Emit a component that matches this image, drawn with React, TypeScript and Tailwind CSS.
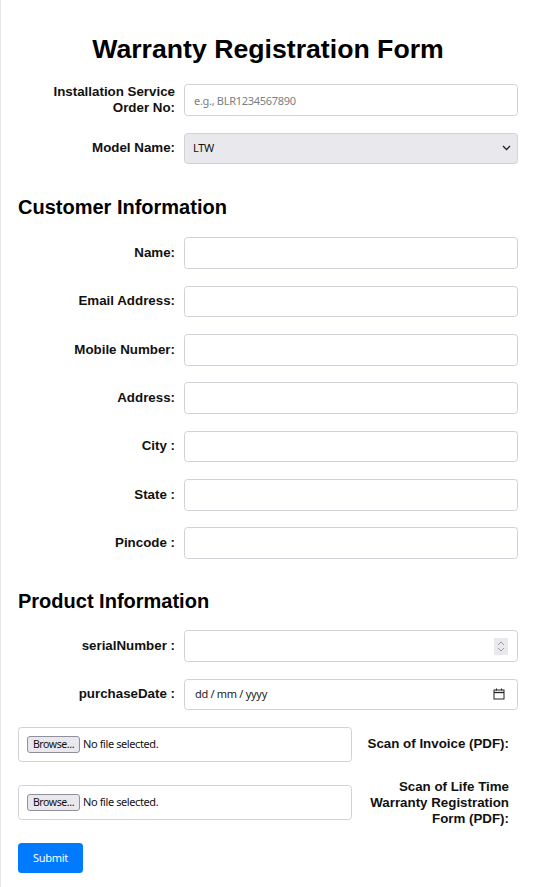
import React from 'react';

const ctrlFont = { fontFamily: '"Noto Sans", "Open Sans", sans-serif' };
const boxCls = 'h-[31.67px] w-full rounded-[3.5px] border border-[#cfd3d8] bg-white';

function Row({ label, children }: { label: React.ReactNode; children: React.ReactNode }) {
    return (
        <div className="mb-[16.67px] flex items-center">
            <label className="w-[166px] shrink-0 pr-[9px] text-right text-[13.33px] font-bold leading-[16px] text-[#111]">
                {label}
            </label>
            <div className="flex-1">{children}</div>
        </div>
    );
}

function TextInput({ placeholder }: { placeholder?: string }) {
    return (
        <input
            type="text"
            placeholder={placeholder}
            style={ctrlFont}
            className={`${boxCls} px-[9px] text-[11px] tracking-[-0.3px] text-[#333] outline-none placeholder:text-[#7a7f85]`}
        />
    );
}

function FileBox() {
    return (
        <div
            style={ctrlFont}
            className="flex h-[35px] w-full items-center rounded-[3.5px] border border-[#cfd3d8] bg-white pl-[8px] text-[11px] tracking-[-0.4px] text-[#111]"
        >
            <span className="mr-[3px] flex h-[17px] w-[53px] items-center justify-center rounded-[3px] border border-[#8f8f9d] bg-[#e9e9ed] text-[10.5px]">
                Browse...
            </span>
            No file selected.
        </div>
    );
}

export default function App() {
    return (
        <div className="min-h-screen border-l border-[#e6e6e6] bg-white" style={{ fontFamily: '"Liberation Sans", Arial, sans-serif' }}>
            <div className="w-[517px] pl-[17px] pt-[33px] pb-[20px]">
                <h1 className="mb-[19px] text-center text-[26.67px] font-bold leading-[32px] text-black">
                    Warranty Registration Form
                </h1>

                <Row label={<>Installation Service<br />Order No:</>}>
                    <TextInput placeholder="e.g., BLR1234567890" />
                </Row>
                <Row label="Model Name:">
                    <div
                        style={ctrlFont}
                        className="flex h-[31.67px] w-full items-center justify-between rounded-[3.5px] border border-[#cfd3d8] bg-[#e9e9ed] pl-[8px] pr-[6px] text-[11px] tracking-[-0.3px] text-[#111]"
                    >
                        <span>LTW</span>
                        <svg width="9" height="6" viewBox="0 0 9 6" fill="none">
                            <path d="M1 1l3.5 3.5L8 1" stroke="#222" strokeWidth="1.3" />
                        </svg>
                    </div>
                </Row>

                {/* margin collapses with the row's mb, so mt carries the full gap */}
                <h2 className="mt-[30.5px] mb-[18.5px] text-[20px] font-bold leading-[24px] text-black">Customer Information</h2>
                <Row label="Name:"><TextInput /></Row>
                <Row label="Email Address:"><TextInput /></Row>
                <Row label="Mobile Number:"><TextInput /></Row>
                <Row label="Address:"><TextInput /></Row>
                <Row label="City :"><TextInput /></Row>
                <Row label="State :"><TextInput /></Row>
                <Row label="Pincode :"><TextInput /></Row>

                <h2 className="mt-[30.5px] mb-[17px] text-[20px] font-bold leading-[24px] text-black">Product Information</h2>
                <Row label="serialNumber :">
                    <div className={`${boxCls} flex items-center justify-end pr-[9px]`}>
                        <span className="flex h-[17px] w-[14px] flex-col items-center justify-center gap-[1px] bg-[#e9e9ed]">
                            <svg width="8" height="5" viewBox="0 0 8 5" fill="none">
                                <path d="M1 4l3-3 3 3" stroke="#9a9aa4" strokeWidth="1" />
                            </svg>
                            <svg width="8" height="5" viewBox="0 0 8 5" fill="none">
                                <path d="M1 1l3 3 3-3" stroke="#9a9aa4" strokeWidth="1" />
                            </svg>
                        </span>
                    </div>
                </Row>
                <Row label="purchaseDate :">
                    <div
                        style={ctrlFont}
                        className={`${boxCls} flex items-center justify-between pl-[10px] pr-[12px] text-[11px] text-[#222]`}
                    >
                        <span className="tracking-[-0.3px]">dd / mm / yyyy</span>
                        <svg width="12" height="12" viewBox="0 0 12 12" fill="none">
                            <rect x="1" y="2" width="10" height="9" stroke="#222" strokeWidth="1" />
                            <path d="M1 4.5h10" stroke="#222" strokeWidth="1.3" />
                            <path d="M3.5 0.5v2M8.5 0.5v2" stroke="#222" strokeWidth="1" />
                        </svg>
                    </div>
                </Row>

                <div className="mb-[16.67px] flex items-center">
                    <div className="w-[334px] shrink-0"><FileBox /></div>
                    <label className="flex-1 pr-[9px] text-right text-[13.33px] font-bold leading-[16px] text-[#111]">
                        Scan of Invoice (PDF):
                    </label>
                </div>
                <div className="mb-[16.67px] flex items-center">
                    <div className="w-[334px] shrink-0"><FileBox /></div>
                    <label className="flex-1 pl-[10px] pr-[9px] text-right text-[13.33px] font-bold leading-[16px] text-[#111]">
                        Scan of Life Time Warranty Registration Form (PDF):
                    </label>
                </div>

                <button
                    type="button"
                    style={ctrlFont}
                    className="h-[30px] w-[65px] rounded-[3.5px] bg-[#007bff] text-[11px] tracking-[-0.3px] text-white"
                >
                    Submit
                </button>
            </div>
        </div>
    );
}
